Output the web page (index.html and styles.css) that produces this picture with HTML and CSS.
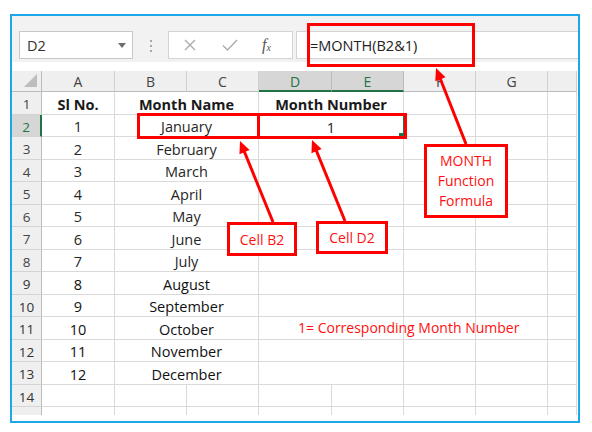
FILE: index.html
```html
<!DOCTYPE html>
<html>
<head>
<meta charset="utf-8">
<title>MONTH function</title>
<link rel="stylesheet" href="styles.css">
</head>
<body>
<div class="stage">
  <div class="frame">
    <div class="toolbar">
      <div class="namebox"><span>D2</span><span class="caret"></span></div>
      <div class="grip"><i></i><i></i><i></i></div>
      <div class="fnbox">
        <svg class="ic ic-x" width="12" height="12" viewBox="0 0 12 12"><path d="M1 1L11 11M11 1L1 11"/></svg>
        <svg class="ic ic-check" width="16" height="12" viewBox="0 0 16 12"><path d="M1 6.5L5.5 11L15 1"/></svg>
        <span class="fx"><i>f</i><sub>x</sub></span>
      </div>
      <div class="formula">=MONTH(B2&amp;1)</div>
    </div>
    <div class="sheet">
      <div class="corner"><span class="tri"></span></div>
      <div class="ch">A</div><div class="ch">B</div><div class="ch">C</div><div class="ch sel">D</div><div class="ch sel">E</div><div class="ch">F</div><div class="ch">G</div><div class="ch"></div>

      <div class="rh">1</div><div class="c b">Sl No.</div><div class="c s2 b">Month Name</div><div class="c s2 b">Month Number</div><div class="c"></div><div class="c"></div><div class="c"></div>
      <div class="rh sel">2</div><div class="c">1</div><div class="c s2">January</div><div class="c s2 active">1</div><div class="c"></div><div class="c"></div><div class="c"></div>
      <div class="rh">3</div><div class="c">2</div><div class="c s2">February</div><div class="c s2"></div><div class="c"></div><div class="c"></div><div class="c"></div>
      <div class="rh">4</div><div class="c">3</div><div class="c s2">March</div><div class="c s2"></div><div class="c"></div><div class="c"></div><div class="c"></div>
      <div class="rh">5</div><div class="c">4</div><div class="c s2">April</div><div class="c s2"></div><div class="c"></div><div class="c"></div><div class="c"></div>
      <div class="rh">6</div><div class="c">5</div><div class="c s2">May</div><div class="c s2"></div><div class="c"></div><div class="c"></div><div class="c"></div>
      <div class="rh">7</div><div class="c">6</div><div class="c s2">June</div><div class="c s2"></div><div class="c"></div><div class="c"></div><div class="c"></div>
      <div class="rh">8</div><div class="c">7</div><div class="c s2">July</div><div class="c s2"></div><div class="c"></div><div class="c"></div><div class="c"></div>
      <div class="rh dk">9</div><div class="c dk">8</div><div class="c s2 dk">August</div><div class="c s2"></div><div class="c"></div><div class="c"></div><div class="c"></div>
      <div class="rh dk">10</div><div class="c dk">9</div><div class="c s2 dk">September</div><div class="c s2"></div><div class="c"></div><div class="c"></div><div class="c"></div>
      <div class="rh dk">11</div><div class="c dk">10</div><div class="c s2 dk">October</div><div class="c s2"></div><div class="c"></div><div class="c"></div><div class="c"></div>
      <div class="rh dk">12</div><div class="c dk">11</div><div class="c s2 dk">November</div><div class="c s2"></div><div class="c"></div><div class="c"></div><div class="c"></div>
      <div class="rh dk">13</div><div class="c dk">12</div><div class="c s2 dk">December</div><div class="c s2"></div><div class="c"></div><div class="c"></div><div class="c"></div>
      <div class="rh dk">14</div><div class="c"></div><div class="c"></div><div class="c"></div><div class="c"></div><div class="c"></div><div class="c"></div><div class="c"></div><div class="c"></div>
      <div class="rh dk">15</div><div class="c"></div><div class="c"></div><div class="c"></div><div class="c"></div><div class="c"></div><div class="c"></div><div class="c"></div><div class="c"></div>
    </div>
  </div>

  <div class="ann box-formula"></div>
  <div class="ann box-b2"></div>
  <div class="ann box-d2"></div>
  <div class="ann label label-b2">Cell B2</div>
  <div class="ann label label-d2">Cell D2</div>
  <div class="ann label label-fn">MONTH<br>Function<br>Formula</div>
  <div class="note">1= Corresponding Month Number</div>

  <svg class="arrows" width="592" height="432" viewBox="0 0 592 432">
    <line x1="273" y1="222" x2="243.77" y2="150.26"/>
    <polygon points="240,141 249.62,150.03 239.44,154.19"/>
    <line x1="345" y1="221" x2="315.77" y2="149.26"/>
    <polygon points="312,140 321.62,149.03 311.44,153.19"/>
    <line x1="466" y1="144" x2="439.67" y2="77.30"/>
    <polygon points="436,68 445.53,77.14 435.29,81.18"/>
  </svg>
</div>
</body>
</html>
```

FILE: styles.css
```css
html, body {
  margin: 0;
  padding: 0;
  background: #ffffff;
}

.stage {
  position: relative;
  width: 592px;
  height: 432px;
  overflow: hidden;
  box-sizing: border-box;
  padding: 14px 0 0 10px;
  background: #ffffff;
  font-family: "Open Sans", "Liberation Sans", sans-serif;
}

.frame {
  width: 570px;
  height: 409px;
  box-sizing: border-box;
  border: 2px solid #1ba7ea;
  background: #ffffff;
  overflow: hidden;
}

/* ---------- formula toolbar ---------- */
.toolbar {
  height: 46px;
  box-sizing: border-box;
  padding: 15px 0 0 7px;
  background: #f2f2f2;
  display: flex;
  align-items: flex-start;
}

.namebox {
  width: 114px;
  height: 28px;
  box-sizing: border-box;
  border: 1px solid #c8c8c8;
  background: #ffffff;
  display: flex;
  align-items: center;
  justify-content: space-between;
  padding: 0 6px 0 7px;
  font-size: 14.5px;
  color: #333333;
}

.caret {
  width: 0;
  height: 0;
  border-left: 4px solid transparent;
  border-right: 4px solid transparent;
  border-top: 5px solid #6e6e6e;
}

.grip {
  width: 3px;
  margin: 9px 0 0 17px;
  display: flex;
  flex-direction: column;
  gap: 3px;
}

.grip i {
  display: block;
  width: 2px;
  height: 2px;
  background: #a6a6a6;
}

.fnbox {
  width: 125px;
  height: 28px;
  box-sizing: border-box;
  margin-left: 15px;
  border: 1px solid #d3d3d3;
  background: #ffffff;
  display: flex;
  align-items: center;
  padding-left: 15px;
}

.ic {
  fill: none;
  stroke: #ababab;
  stroke-width: 1.4;
}

.ic-check {
  margin-left: 26px;
}

.fx {
  margin-left: 24px;
  font-family: "Liberation Serif", serif;
  color: #555555;
  font-size: 16px;
  line-height: 1;
}

.fx i {
  font-style: italic;
}

.fx sub {
  font-style: italic;
  font-size: 10px;
  vertical-align: -1px;
}

.formula {
  flex: 1;
  height: 28px;
  box-sizing: border-box;
  margin-left: 3px;
  border: 1px solid #d3d3d3;
  border-right: none;
  background: #ffffff;
  display: flex;
  align-items: center;
  padding-left: 13px;
  font-size: 14.5px;
  color: #222222;
}

/* ---------- sheet ---------- */
.sheet {
  margin-top: 9px;
  height: 344px;
  overflow: hidden;
  display: grid;
  grid-template-columns: 30px 73px 72px 72px 73px 72px 72px 72px 29px;
  grid-template-rows: 21px repeat(15, 22.5px);
}

.corner {
  position: relative;
  background: #efefef;
  border-right: 1px solid #bcbcbc;
  border-bottom: 1px solid #bcbcbc;
}

.tri {
  position: absolute;
  right: 4px;
  bottom: 4px;
  width: 0;
  height: 0;
  border-left: 13px solid transparent;
  border-bottom: 13px solid #bdbdbd;
}

.ch {
  box-sizing: border-box;
  padding-top: 2px;
  background: #efefef;
  border-right: 1px solid #d0d0d0;
  border-bottom: 1px solid #bcbcbc;
  display: flex;
  align-items: center;
  justify-content: center;
  font-size: 14px;
  line-height: 18px;
  color: #444444;
}

.ch.sel {
  background: #d6d6d6;
  color: #217346;
  border-bottom: 2px solid #217346;
  border-right-color: #bcbcbc;
}

.rh {
  box-sizing: border-box;
  padding-top: 3px;
  background: #efefef;
  border-right: 1px solid #bcbcbc;
  border-bottom: 1px solid #d4d4d4;
  display: flex;
  align-items: center;
  justify-content: center;
  font-size: 13.5px;
  line-height: 18px;
  color: #444444;
}

.rh.sel {
  background: #d6d6d6;
  color: #217346;
  border-right: 2px solid #217346;
}

.c {
  box-sizing: border-box;
  padding-top: 4px;
  border-right: 1px solid #dadada;
  border-bottom: 1px solid #dadada;
  display: flex;
  align-items: center;
  justify-content: center;
  font-size: 14.5px;
  line-height: 18px;
  color: #262626;
  white-space: nowrap;
}

.s2 {
  grid-column: span 2;
}

.b {
  font-weight: 700;
  color: #1a1a1a;
}

.dk {
  color: #111111;
}

.rh.dk {
  color: #333333;
}

.active {
  position: relative;
  border-top: 1px solid #217346;
  border-right: 1px solid #217346;
}

.active::after {
  content: "";
  position: absolute;
  right: -1px;
  bottom: -2px;
  width: 5px;
  height: 5px;
  background: #217346;
}

/* ---------- annotations ---------- */
.ann {
  position: absolute;
  box-sizing: border-box;
  border: 3px solid #ff0000;
}

.box-formula {
  left: 307px;
  top: 23px;
  width: 168px;
  height: 44px;
}

.box-b2 {
  left: 137px;
  top: 113px;
  width: 123px;
  height: 26px;
}

.box-d2 {
  left: 257px;
  top: 113px;
  width: 150px;
  height: 26px;
}

.label {
  background: #ffffff;
  color: #ff1010;
  font-size: 14px;
  display: flex;
  align-items: center;
  justify-content: center;
  text-align: center;
}

.label-b2 {
  left: 227px;
  top: 222px;
  width: 70px;
  height: 34px;
}

.label-d2 {
  left: 316px;
  top: 221px;
  width: 72px;
  height: 33px;
}

.label-fn {
  left: 424px;
  top: 144px;
  width: 84px;
  height: 74px;
  line-height: 20px;
}

.note {
  position: absolute;
  left: 298px;
  top: 318px;
  font-size: 14px;
  color: #ff1010;
  white-space: nowrap;
}

.arrows {
  position: absolute;
  left: 0;
  top: 0;
  pointer-events: none;
}

.arrows line {
  stroke: #ff0000;
  stroke-width: 3;
}

.arrows polygon {
  fill: #ff0000;
}
```
